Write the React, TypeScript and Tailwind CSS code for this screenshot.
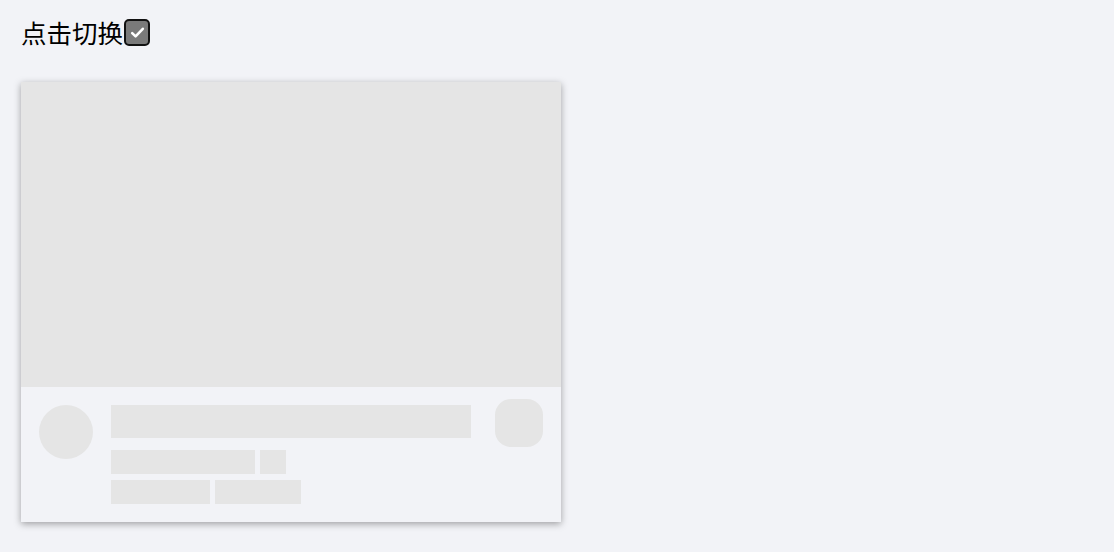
export default function App() {
  return (
    <div
      className="min-h-[552px] bg-[#f2f3f7] px-[21px] pt-[13px]"
      style={{ fontFamily: '"Noto Sans CJK SC", "Noto Sans", sans-serif' }}
    >
      <label className="flex h-[38px] items-center text-[25.5px] leading-none text-black">
        <span>点击切换</span>
        <span className="ml-[1px] flex h-[27px] w-[26px] items-center justify-center rounded-[5px] border-[2.5px] border-[#111] bg-[#7a7a7a]">
          <svg viewBox="0 0 16 16" className="size-[17px]" fill="none">
            <path
              d="M3 8.5l3.2 3.2L13 4.5"
              stroke="#fff"
              strokeWidth="2.4"
              strokeLinecap="round"
              strokeLinejoin="round"
            />
          </svg>
        </span>
      </label>

      <div className="mt-[31px] flex w-[540px] flex-col bg-[#f2f3f7] shadow-[0_2px_7px_rgba(0,0,0,0.35)]">
        <div className="h-[305px] bg-[#e5e5e5]" />
        <div className="flex gap-[18px] p-[18px]">
          <div className="size-[54px] shrink-0 rounded-full bg-[#e5e5e5]" />
          <div className="flex flex-1 flex-col">
            <div className="h-[33px] w-[360px] bg-[#e5e5e5]" />
            <div className="mt-[12px] flex gap-[5px]">
              <div className="h-[24px] w-[144px] bg-[#e5e5e5]" />
              <div className="h-[24px] w-[26px] bg-[#e5e5e5]" />
            </div>
            <div className="mt-[6px] flex gap-[5px]">
              <div className="h-[24px] w-[99px] bg-[#e5e5e5]" />
              <div className="h-[24px] w-[86px] bg-[#e5e5e5]" />
            </div>
          </div>
          <div className="-mt-[6px] size-[48px] shrink-0 rounded-[16px] bg-[#e5e5e5]" />
        </div>
      </div>
    </div>
  );
}
